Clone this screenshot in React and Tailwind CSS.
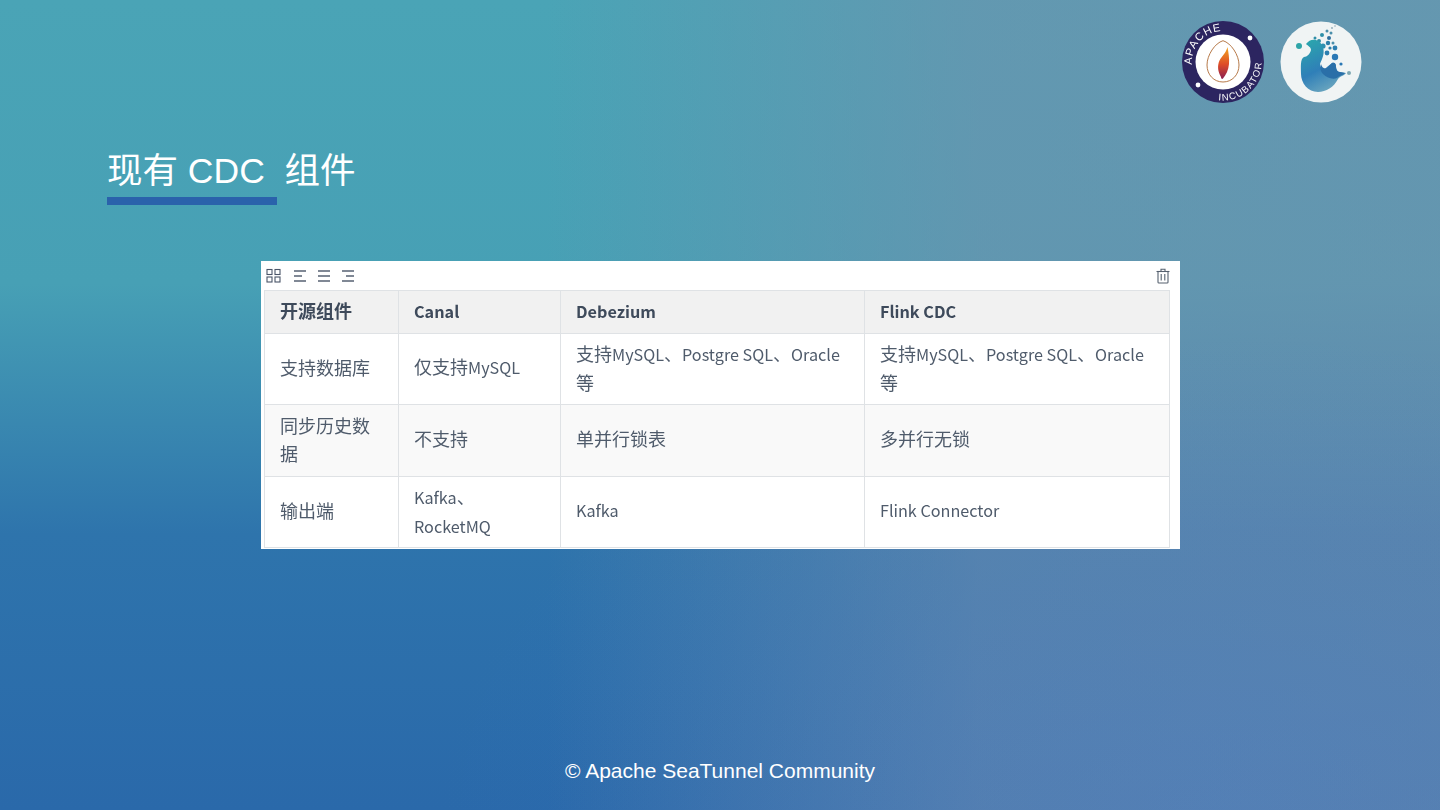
import React from "react";

const sans = "font-['Liberation_Sans','Noto_Sans_CJK_SC',sans-serif]";

function IncubatorLogo() {
  return (
    <svg width="84" height="84" viewBox="0 0 84 84" className="shrink-0 blur-[0.3px]">
      <defs>
        <path id="arcTop" d="M 11.1 44.7 A 31 31 0 0 1 65.7 22" />
        <path id="arcRight" d="M 37.3 80.2 A 38.5 38.5 0 0 0 79.9 35.3" />
        <linearGradient id="flame" x1="0" y1="0" x2="0" y2="1">
          <stop offset="0" stopColor="#f4a51f" />
          <stop offset="0.55" stopColor="#dd4b28" />
          <stop offset="1" stopColor="#8b1f52" />
        </linearGradient>
      </defs>
      <circle cx="42" cy="42" r="41" fill="#2c2560" />
      <circle cx="42" cy="42" r="27.5" fill="#ffffff" />
      <path d="M42 20.7C50 23 58 35 58 45C58 55 51 62 42 62C33 62 26 55 26 45C26 35 34 23 42 20.7Z" fill="none" stroke="#b77a4a" strokeWidth="1" />
      <path d="M46.5 27C47.5 33 48.5 38 48 44C47.5 50 45 55 42 58.5C41 59.5 40 58.5 40 57C37 52 36 46 38.5 40.5C41 36 45 33 46.5 27Z" fill="url(#flame)" />
      <text fontSize="11" fill="#ffffff" letterSpacing="0.9" className="font-['Liberation_Sans',sans-serif]">
        <textPath href="#arcTop">APACHE</textPath>
      </text>
      <text fontSize="9.5" fill="#ffffff" letterSpacing="1.1" className="font-['Liberation_Sans',sans-serif]">
        <textPath href="#arcRight">INCUBATOR</textPath>
      </text>
      <circle cx="69" cy="18" r="2.4" fill="#ffffff" />
      <circle cx="17" cy="65" r="2.4" fill="#ffffff" />
    </svg>
  );
}

function SeaTunnelLogo() {
  const dots = [
    [55, 5, 0.8, "#8fa9b5"], [52, 7, 0.9, "#8fa9b5"], [47, 10, 1.5, "#4a8fab"], [51, 12, 1.5, "#4a8fab"],
    [42, 14, 2, "#2f8fa8"], [49, 17, 2, "#2d6f9e"], [35, 17, 1.5, "#2f8fa8"], [39, 20, 2, "#2f8fa8"],
    [48, 22, 2.2, "#2d7fa8"], [43, 25, 2.6, "#2f8fb0"], [53, 22, 1.5, "#4a8fab"], [55, 27, 2.4, "#2d7fb0"],
    [47, 32, 2.4, "#2d7fb0"], [55, 36, 3.2, "#2a78b5"], [50, 27, 1.6, "#2d7fa8"], [19, 25, 3, "#2ea5a8"],
    [69, 52, 2, "#7fa8b3"], [61, 43, 1.6, "#2a78b5"],
  ];
  return (
    <svg width="82" height="82" viewBox="0 0 82 82" className="shrink-0 blur-[0.3px]">
      <defs>
        <linearGradient id="wave" x1="0.2" y1="0" x2="0.65" y2="1">
          <stop offset="0" stopColor="#2ba5ad" />
          <stop offset="0.55" stopColor="#2f7fb8" />
          <stop offset="1" stopColor="#6fa9bf" />
        </linearGradient>
      </defs>
      <circle cx="41" cy="41" r="40.5" fill="#f0f4f4" />
      {dots.map(([x, y, r, c], i) => (
        <circle key={i} cx={x} cy={y} r={r} fill={c} />
      ))}
      <path d="M26 23C31 16 40 18 43 26C45 33 42 38 40 43C40 47 44 50 47 46L52 42C55 41 56 43 56 46C56 49 58 51 60 51L66 52C64 55 60 55 58 58C54 66 46 71 38 71C28 71 21 62 21 53C21 46 20 38 24 36C27 36 30 33 31 29C31 26 28 25 26 23Z" fill="url(#wave)" />
      <path d="M41 43C42 47 45 49 48 46L52 42C55 41 56 43 56 46C56 49 58 51 60 51L65 52C62 55 60 54 57 57C52 59 46 56 43 53C40 50 40 46 41 43Z" fill="#2a6fa8" />
    </svg>
  );
}

function AlignIcon({ kind }) {
  const lines =
    kind === "left"
      ? [[1, 13, 3], [1, 9, 8], [1, 13, 13]]
      : kind === "center"
      ? [[1, 13, 3], [1, 13, 8], [1, 13, 13]]
      : [[1, 13, 3], [5, 13, 8], [1, 13, 13]];
  return (
    <svg width="14" height="16" viewBox="0 0 14 16" fill="none" stroke="#4a5568" strokeWidth="1.4" className="shrink-0">
      {lines.map(([a, b, y]) => (
        <path key={y} d={`M${a} ${y}H${b}`} />
      ))}
    </svg>
  );
}

function Toolbar() {
  return (
    <div className="h-[29px] flex items-center pl-[5px] pr-[10px] justify-between">
      <div className="flex items-center">
        <svg width="15" height="15" viewBox="0 0 15 15" fill="none" stroke="#4a5568" strokeWidth="1.1" className="shrink-0">
          <rect x="1" y="1.5" width="5" height="5" />
          <rect x="9" y="1.5" width="5" height="5" />
          <rect x="1" y="9" width="5" height="5" />
          <rect x="9" y="9" width="5" height="5" />
        </svg>
        <div className="flex items-center gap-[10px] ml-[12px]">
          <AlignIcon kind="left" />
          <AlignIcon kind="center" />
          <AlignIcon kind="right" />
        </div>
      </div>
      <svg width="14" height="16" viewBox="0 0 14 16" fill="none" stroke="#56616f" strokeWidth="1.1" className="shrink-0">
        <path d="M0.5 3.5H13.5" />
        <path d="M5 3V1.2H9V3" />
        <path d="M2 3.5V14.2C2 14.8 2.4 15 3 15H11C11.6 15 12 14.8 12 14.2V3.5" />
        <path d="M5.2 6V12.5M8.8 6V12.5" />
      </svg>
    </div>
  );
}

function L({ children }) {
  return <span className="text-[16.2px]">{children}</span>;
}

const mysqlRow = (
  <>
    支持<L>MySQL</L>、<L>Postgre SQL</L>、<L>Oracle</L>等
  </>
);

const rows = [
  [["支持数据库", 1], [<>仅支持<L>MySQL</L></>, 1], [mysqlRow, 2], [mysqlRow, 2]],
  [["同步历史数据", 2], ["不支持", 1], ["单并行锁表", 1], ["多并行无锁", 1]],
  [["输出端", 1], [<><L>Kafka</L>、<L>RocketMQ</L></>, 2], [<L>Kafka</L>, 1], [<L>Flink Connector</L>, 1]],
];

const headers = ["开源组件", <L>Canal</L>, <L>Debezium</L>, <L>Flink CDC</L>];

function Table() {
  const cell = "border border-[#dfe2e5] pl-[15px] pr-[15px] align-middle";
  return (
    <table className="table-fixed border-collapse w-[905px] ml-[3px] text-[18px] leading-[28px] text-[#4f5b6b] font-['Noto_Sans_CJK_SC',sans-serif]">
      <colgroup>
        <col className="w-[134px]" />
        <col className="w-[162px]" />
        <col className="w-[304px]" />
        <col className="w-[305px]" />
      </colgroup>
      <thead>
        <tr className="h-[43px] bg-[#f1f1f1]">
          {headers.map((h, i) => (
            <th key={i} className={`${cell} pb-[4px] text-left font-semibold text-[#3e4a5b]`}>{h}</th>
          ))}
        </tr>
      </thead>
      <tbody>
        {rows.map((r, i) => (
          <tr key={i} className={i === 1 ? "h-[72px] bg-[#f9f9f9]" : "h-[71px] bg-white"}>
            {r.map(([c, lines], j) => (
              <td key={j} className={`${cell} ${lines === 2 ? "pb-[3px]" : "pb-[5px]"}`}>{c}</td>
            ))}
          </tr>
        ))}
      </tbody>
    </table>
  );
}

export default function App() {
  return (
    <div
      className={`${sans} w-[1440px] h-[810px] overflow-hidden flex flex-col text-white bg-[radial-gradient(ellipse_55%_60%_at_85%_100%,rgba(70,130,235,0.16),rgba(70,130,235,0)),linear-gradient(90deg,rgba(118,143,172,0)_38%,rgba(118,143,172,0.55)_68%,rgba(118,143,172,0.6)_100%),linear-gradient(180deg,#4aa4b6_0%,#47a0b5_35%,#2e74ac_66%,#2a69aa_100%)]`}
    >
      <div className="flex justify-end items-center gap-[15px] pt-[21px] pr-[78px] h-[103px]">
        <IncubatorLogo />
        <SeaTunnelLogo />
      </div>

      <div className="pl-[107px] mt-[46px]">
        <div className="text-[35.5px] leading-[44px] whitespace-pre">现有 CDC  组件</div>
        <div className="w-[170px] h-[8px] mt-[4px] bg-[#2a62ab]" />
      </div>

      <div className="ml-[261px] mt-[56px] w-[919px] h-[288px] bg-white overflow-hidden blur-[0.3px]">
        <Toolbar />
        <Table />
      </div>

      <div className="mt-[210px] text-center text-[21px] leading-[24px]">© Apache SeaTunnel Community</div>
    </div>
  );
}
